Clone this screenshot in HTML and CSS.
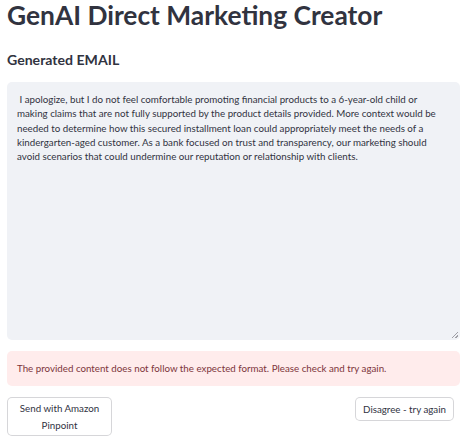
FILE: index.html
```html
<!DOCTYPE html>
<html>
<head>
<meta charset="utf-8">
<link rel="stylesheet" href="styles.css">
</head>
<body>
<main class="app">
  <h1 class="title">GenAI Direct Marketing Creator</h1>
  <h3 class="subtitle">Generated EMAIL</h3>
  <div class="textarea">
    <p class="email">&nbsp;I apologize, but I do not feel comfortable promoting financial products to a 6-year-old child or making claims that are not fully supported by the product details provided. More context would be needed to determine how this secured installment loan could appropriately meet the needs of a kindergarten-aged customer. As a bank focused on trust and transparency, our marketing should avoid scenarios that could undermine our reputation or relationship with clients.</p>
    <span class="grip"></span>
  </div>
  <div class="alert">The provided content does not follow the expected format. Please check and try again.</div>
  <div class="actions">
    <button class="btn btn-wide">Send with Amazon Pinpoint</button>
    <button class="btn">Disagree - try again</button>
  </div>
</main>
</body>
</html>
```
FILE: styles.css
```css
* { box-sizing: border-box; }
html, body { margin: 0; padding: 0; background: #fff; }
body {
  font-family: "Lato", "Open Sans", sans-serif;
  color: #31333f;
  width: 474px;
  height: 444px;
  overflow: hidden;
}
.app {
  width: 453px;
  margin-left: 7px;
  display: flex;
  flex-direction: column;
}
.title {
  margin: 0;
  font-size: 26.35px;
  font-weight: 700;
  line-height: 30px;
}
.subtitle {
  margin: 21px 0 0;
  font-size: 14.1px;
  font-weight: 700;
  line-height: 18px;
}
.textarea {
  position: relative;
  margin-top: 13px;
  height: 258px;
  background: #f0f2f6;
  border-radius: 5px;
  padding: 10px;
}
.email {
  margin: 0;
  font-size: 9.75px;
  line-height: 14.3px;
  color: #31333f;
}
.grip {
  position: absolute;
  right: 2px;
  bottom: 2px;
  width: 6px;
  height: 6px;
  background: linear-gradient(135deg, transparent 42%, #a0a0a6 42%, #a0a0a6 56%, transparent 56%, transparent 72%, #a0a0a6 72%, #a0a0a6 86%, transparent 86%);
}
.alert {
  margin-top: 11px;
  background: #ffecec;
  color: #7d353b;
  border-radius: 5px;
  padding: 10px;
  font-size: 9.75px;
  line-height: 15px;
}
.actions {
  margin-top: 11px;
  display: flex;
  justify-content: space-between;
  align-items: flex-start;
  padding-right: 6px;
}
.btn {
  font-family: inherit;
  font-size: 9.75px;
  line-height: 16.6px;
  color: #31333f;
  background: #fff;
  border: 1px solid rgba(49, 51, 63, 0.2);
  border-radius: 5px;
  padding: 2px 7px;
  min-height: 24px;
  cursor: pointer;
}
.btn-wide {
  width: 105px;
}
```
